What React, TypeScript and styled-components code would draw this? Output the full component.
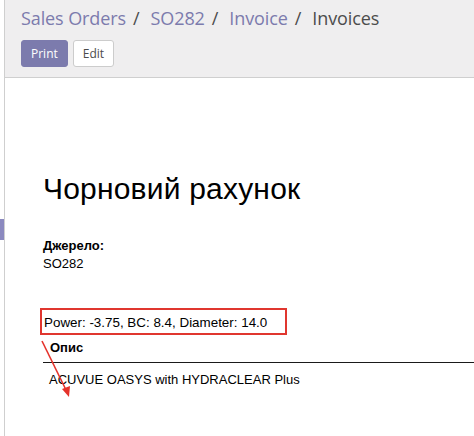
import React from 'react';
import styled, { createGlobalStyle } from 'styled-components';

const GlobalStyle = createGlobalStyle`
  body {
    margin: 0;
    background: #ffffff;
    font-family: "Liberation Sans", Arial, sans-serif;
  }
`;

const Page = styled.div`
  position: relative;
  display: flex;
  width: 474px;
  height: 436px;
  overflow: hidden;
  background: #ffffff;
`;

const Rail = styled.div`
  width: 4px;
  flex-shrink: 0;
  border-right: 1px solid #cfcfcf;
  display: flex;
  flex-direction: column;
`;

const RailTab = styled.div`
  margin-top: 219px;
  height: 21px;
  width: 4px;
  background: #8b89bf;
`;

const Main = styled.div`
  flex: 1;
  display: flex;
  flex-direction: column;
  min-width: 0;
`;

const ControlPanel = styled.div`
  background: #efeeef;
  border-bottom: 1px solid #cfcfcf;
  padding: 5px 0 10px 16px;
  display: flex;
  flex-direction: column;
  gap: 9px;
`;

const Breadcrumb = styled.div`
  font-family: "Open Sans", "Noto Sans", sans-serif;
  font-size: 18px;
  line-height: 26px;
  letter-spacing: -0.1px;
  white-space: nowrap;
  display: flex;
`;

const Crumb = styled.span<{ $active?: boolean }>`
  color: ${p => (p.$active ? '#4c4c4c' : '#7c7bad')};
`;

const Sep = styled.span`
  color: #4c4c4c;
  padding: 0 11px 0 7px;
`;

const ButtonRow = styled.div`
  display: flex;
  gap: 5px;
`;

const Button = styled.button<{ $primary?: boolean }>`
  font-family: "Open Sans", "Noto Sans", sans-serif;
  font-size: 12px;
  height: 27px;
  padding: 0 9px;
  border-radius: 3px;
  border: 1px solid ${p => (p.$primary ? '#7c7bad' : '#cccccc')};
  background: ${p => (p.$primary ? '#7c7bad' : '#ffffff')};
  color: ${p => (p.$primary ? '#ffffff' : '#4c4c4c')};
`;

const Sheet = styled.div`
  padding: 94px 0 0 38px;
  color: #000000;
`;

const Title = styled.h1`
  margin: 0;
  font-size: 30px;
  line-height: 34px;
  font-weight: 400;
  letter-spacing: 0.2px;
`;

const Field = styled.div`
  margin-top: 31px;
  font-size: 13px;
  line-height: 18px;
`;

const FieldLabel = styled.div`
  font-weight: 700;
`;

const Highlight = styled.div`
  margin: 35px 0 0 -3px;
  width: 241px;
  border: 2px solid #e0362f;
  padding: 3px 0 0 2px;
  font-size: 13.4px;
  line-height: 20px;
  white-space: nowrap;
`;

const Lines = styled.table`
  margin-top: 4px;
  width: 100%;
  border-collapse: collapse;
`;

const HeadCell = styled.th`
  text-align: left;
  font-size: 13px;
  line-height: 18px;
  font-weight: 700;
  padding: 0 6px 5px 7px;
  border-bottom: 1px solid #1a1a1a;
`;

const Cell = styled.td`
  font-size: 13px;
  line-height: 20px;
  padding: 7px 6px 0 6px;
  white-space: nowrap;
`;

const Arrow = styled.svg`
  position: absolute;
  left: 38px;
  top: 338px;
`;

export default function App() {
  return (
    <>
      <GlobalStyle />
      <Page>
        <Rail>
          <RailTab />
        </Rail>
        <Main>
          <ControlPanel>
            <Breadcrumb>
              <Crumb>Sales Orders</Crumb>
              <Sep>/</Sep>
              <Crumb>SO282</Crumb>
              <Sep>/</Sep>
              <Crumb>Invoice</Crumb>
              <Sep>/</Sep>
              <Crumb $active>Invoices</Crumb>
            </Breadcrumb>
            <ButtonRow>
              <Button $primary>Print</Button>
              <Button>Edit</Button>
            </ButtonRow>
          </ControlPanel>
          <Sheet>
            <Title>Чорновий рахунок</Title>
            <Field>
              <FieldLabel>Джерело:</FieldLabel>
              <div>SO282</div>
            </Field>
            <Highlight>Power: -3.75, BC: 8.4, Diameter: 14.0</Highlight>
            <Lines>
              <thead>
                <tr>
                  <HeadCell>Опис</HeadCell>
                </tr>
              </thead>
              <tbody>
                <tr>
                  <Cell>ACUVUE OASYS with HYDRACLEAR Plus</Cell>
                </tr>
              </tbody>
            </Lines>
          </Sheet>
        </Main>
        <Arrow width="40" height="66" viewBox="0 0 40 66">
          <line x1="4" y1="3" x2="30" y2="56" stroke="#e5322b" strokeWidth="1.6" />
          <polygon points="31,59 24,51 32,48" fill="#e5322b" />
        </Arrow>
      </Page>
    </>
  );
}
